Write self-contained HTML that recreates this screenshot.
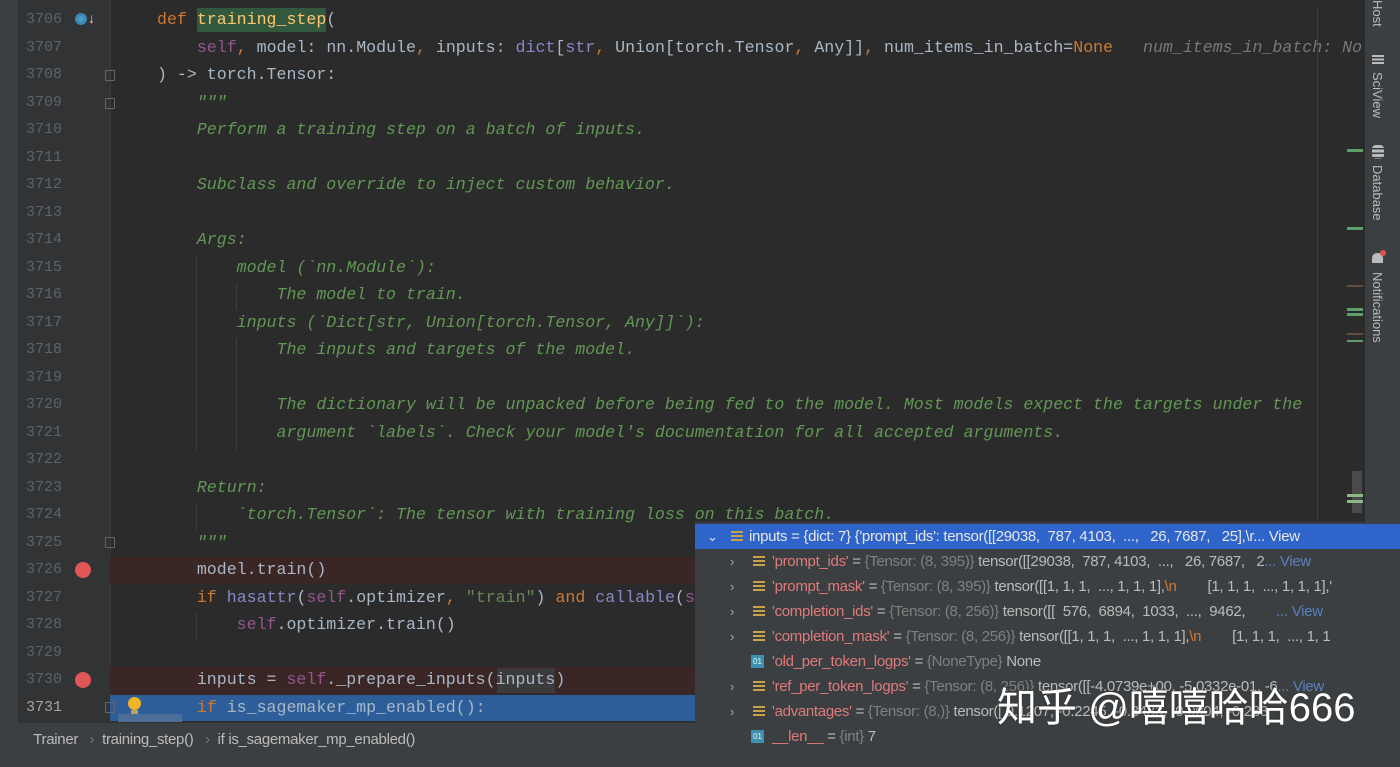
<!DOCTYPE html>
<html><head><meta charset="utf-8"><style>
*{margin:0;padding:0;box-sizing:border-box}
body{width:1400px;height:767px;overflow:hidden;background:#2b2b2b;position:relative;font-family:"Liberation Mono",monospace}
.ln{position:absolute;left:18px;width:44px;text-align:right;color:#5f6366;font-size:15px;height:27px;line-height:27px}
.cl{position:absolute;left:157px;font-size:16.6px;color:#a9b7c6;white-space:pre;height:27px;line-height:27px}
.k{color:#cc7832}.s{color:#94558d}.d{color:#629755;font-style:italic}.st{color:#6a8759}.b{color:#8888c6}
.h{color:#787878;font-style:italic}
.row{position:absolute;left:110px;width:1210px;height:27px}
.bp{position:absolute;left:75px;width:16px;height:16px;border-radius:50%;background:#e05555}
.pop{position:absolute;left:695px;top:522px;width:705px;height:245px;background:#3c3f41;font-family:"Liberation Sans",sans-serif;font-size:15px;color:#bbbbbb;overflow:hidden}
.pr{position:absolute;left:0;height:25px;line-height:25px;white-space:pre;width:705px;letter-spacing:-0.3px}
.pr span{white-space:pre}
.ar{position:absolute;left:35px;color:#aaa;font-size:13px}
.ic{position:absolute;left:58px;top:7px;width:12px;height:11px;background:repeating-linear-gradient(#c9a24a 0 2px,transparent 2px 4px)}
.i01{position:absolute;left:56px;top:6px;width:13px;height:13px;background:#3f8fb0;color:#dfe;font-size:8px;line-height:13px;text-align:center;letter-spacing:0}
.n{color:#e07a7a}.g{color:#808080}.v{color:#5a7fbf}.o{color:#cc7832}
.vt{position:absolute;writing-mode:vertical-rl;color:#bbb;font-family:"Liberation Sans",sans-serif;font-size:13px;left:1370px}
</style></head><body>
<div style="position:absolute;left:0;top:0;width:18px;height:767px;background:#3c3f41"></div>
<div style="position:absolute;left:18px;top:0;width:92px;height:722px;background:#313335"></div>
<div style="position:absolute;left:110px;top:0;width:1px;height:722px;background:#3a3a3a"></div>
<div style="position:absolute;left:1317px;top:8px;width:1px;height:714px;background:#3f3f3f"></div>
<div style="position:absolute;left:1365px;top:0;width:35px;height:522px;background:#3c3f41"></div>
<div class="vt" style="top:0">Host</div>
<div style="position:absolute;left:1372px;top:55px;width:12px;height:9px;background:repeating-linear-gradient(#bbb 0 2px,transparent 2px 3.5px)"></div>
<div class="vt" style="top:72px">SciView</div>
<div style="position:absolute;left:1372px;top:145px;width:12px;height:14px;background:repeating-linear-gradient(#bbb 0 3px,transparent 3px 4.5px);border-radius:4px"></div>
<div class="vt" style="top:165px">Database</div>
<div style="position:absolute;left:1372px;top:253px;width:11px;height:10px;background:#bbb;border-radius:5px 5px 0 0"></div>
<div style="position:absolute;left:1380px;top:250px;width:6px;height:6px;border-radius:50%;background:#e05050"></div>
<div class="vt" style="top:272px">Notifications</div>
<div style="position:absolute;left:1347px;top:149px;width:16px;height:3px;background:#5e9e6a"></div>
<div style="position:absolute;left:1347px;top:227px;width:16px;height:3px;background:#5e9e6a"></div>
<div style="position:absolute;left:1347px;top:285px;width:16px;height:2px;background:#6b4a3e"></div>
<div style="position:absolute;left:1347px;top:308px;width:16px;height:3px;background:#5e9e6a"></div>
<div style="position:absolute;left:1347px;top:313px;width:16px;height:3px;background:#5e9e6a"></div>
<div style="position:absolute;left:1347px;top:333px;width:16px;height:2px;background:#6b4a3e"></div>
<div style="position:absolute;left:1347px;top:340px;width:16px;height:2px;background:#5e9e6a"></div>
<div style="position:absolute;left:1352px;top:471px;width:10px;height:42px;background:#4a4a48"></div>
<div style="position:absolute;left:1347px;top:494px;width:16px;height:3px;background:#8fb88a"></div>
<div style="position:absolute;left:1347px;top:500px;width:16px;height:3px;background:#8fb88a"></div>

<div class="row" style="top:557px;background:#3b2626"></div>
<div class="row" style="top:667px;background:#3b2626"></div>
<div class="row" style="top:695px;left:110px;width:585px;height:26px;background:#2d5e9a"></div>
<div style="position:absolute;left:18px;top:695px;width:92px;height:26px;background:#313335"></div>
<div style="position:absolute;left:118px;top:714px;width:64px;height:8px;background:#4b6e98"></div>
<div style="position:absolute;left:197px;top:8px;width:129px;height:24px;background:#32593d"></div>
<div style="position:absolute;left:497px;top:668px;width:58px;height:25px;background:#3b3b3b"></div>
<div style="position:absolute;left:196px;top:255px;width:1px;height:195px;background:#3d3d3d"></div>
<div style="position:absolute;left:236px;top:283px;width:1px;height:27px;background:#3d3d3d"></div>
<div style="position:absolute;left:236px;top:338px;width:1px;height:112px;background:#3d3d3d"></div>
<div style="position:absolute;left:196px;top:503px;width:1px;height:27px;background:#3d3d3d"></div>
<div style="position:absolute;left:196px;top:613px;width:1px;height:27px;background:#3d3d3d"></div>

<div style="position:absolute;left:75px;top:13px;width:12px;height:12px;border-radius:50%;background:#4a9cc9;border:3px solid #3e87b0"></div>
<div style="position:absolute;left:88px;top:10px;color:#ccc;font-size:14px;font-family:'Liberation Sans'">↓</div>
<div class="bp" style="top:562px"></div>
<div class="bp" style="top:672px"></div>
<div style="position:absolute;left:128px;top:697px;width:13px;height:13px;border-radius:50%;background:#f0b429"></div>
<div style="position:absolute;left:131px;top:710px;width:7px;height:4px;background:#bba060"></div>
<div style="position:absolute;left:105px;top:70px;width:10px;height:11px;border:1px solid #666;border-radius:1px"></div>
<div style="position:absolute;left:105px;top:98px;width:10px;height:11px;border:1px solid #666;border-radius:1px"></div>
<div style="position:absolute;left:105px;top:537px;width:10px;height:11px;border:1px solid #666;border-radius:1px"></div>
<div style="position:absolute;left:105px;top:702px;width:10px;height:11px;border:1px solid #666;border-radius:1px"></div>

<div class="ln" style="top:6px">3706</div>
<div class="ln" style="top:34px">3707</div>
<div class="ln" style="top:61px">3708</div>
<div class="ln" style="top:89px">3709</div>
<div class="ln" style="top:116px">3710</div>
<div class="ln" style="top:144px">3711</div>
<div class="ln" style="top:171px">3712</div>
<div class="ln" style="top:199px">3713</div>
<div class="ln" style="top:226px">3714</div>
<div class="ln" style="top:254px">3715</div>
<div class="ln" style="top:281px">3716</div>
<div class="ln" style="top:309px">3717</div>
<div class="ln" style="top:336px">3718</div>
<div class="ln" style="top:364px">3719</div>
<div class="ln" style="top:391px">3720</div>
<div class="ln" style="top:419px">3721</div>
<div class="ln" style="top:446px">3722</div>
<div class="ln" style="top:474px">3723</div>
<div class="ln" style="top:501px">3724</div>
<div class="ln" style="top:529px">3725</div>
<div class="ln" style="top:556px">3726</div>
<div class="ln" style="top:584px">3727</div>
<div class="ln" style="top:611px">3728</div>
<div class="ln" style="top:639px">3729</div>
<div class="ln" style="top:666px">3730</div>
<div class="ln" style="top:694px;color:#a4a4a4">3731</div>

<div class="cl" style="top:6px"><span class="k">def</span> <span style="color:#ffc66d">training_step</span>(</div>
<div class="cl" style="top:34px">    <span class="s">self</span><span class="k">,</span> model: nn.Module<span class="k">,</span> inputs: <span class="b">dict</span>[<span class="b">str</span><span class="k">,</span> Union[torch.Tensor<span class="k">,</span> Any]]<span class="k">,</span> num_items_in_batch=<span class="k">None</span>   <span class="h">num_items_in_batch: No</span></div>
<div class="cl" style="top:61px">) -> torch.Tensor:</div>
<div class="cl d" style="top:89px">    """</div>
<div class="cl d" style="top:116px">    Perform a training step on a batch of inputs.</div>
<div class="cl d" style="top:171px">    Subclass and override to inject custom behavior.</div>
<div class="cl d" style="top:226px">    Args:</div>
<div class="cl d" style="top:254px">        model (`nn.Module`):</div>
<div class="cl d" style="top:281px">            The model to train.</div>
<div class="cl d" style="top:309px">        inputs (`Dict[str, Union[torch.Tensor, Any]]`):</div>
<div class="cl d" style="top:336px">            The inputs and targets of the model.</div>
<div class="cl d" style="top:391px">            The dictionary will be unpacked before being fed to the model. Most models expect the targets under the</div>
<div class="cl d" style="top:419px">            argument `labels`. Check your model's documentation for all accepted arguments.</div>
<div class="cl d" style="top:474px">    Return:</div>
<div class="cl d" style="top:501px">        `torch.Tensor`: The tensor with training loss on this batch.</div>
<div class="cl d" style="top:529px">    """</div>
<div class="cl" style="top:556px">    model.train()</div>
<div class="cl" style="top:584px">    <span class="k">if</span> <span class="b">hasattr</span>(<span class="s">self</span>.optimizer<span class="k">,</span> <span class="st">"train"</span>) <span class="k">and</span> <span class="b">callable</span>(<span class="s">s</span></div>
<div class="cl" style="top:611px">        <span class="s">self</span>.optimizer.train()</div>
<div class="cl" style="top:666px">    inputs = <span class="s">self</span>._prepare_inputs(inputs)</div>
<div class="cl" style="top:694px">    <span class="k">if</span> is_sagemaker_mp_enabled():</div>

<div style="position:absolute;left:18px;top:722px;width:677px;height:34px;background:#3c3f41;border-top:1px solid #323232;font-family:'Liberation Sans',sans-serif;font-size:15px;color:#bbb;line-height:34px;white-space:pre;letter-spacing:-0.3px">    Trainer   <span style="color:#777">›</span>  training_step()   <span style="color:#777">›</span>  if is_sagemaker_mp_enabled()</div>
<div style="position:absolute;left:0;top:756px;width:695px;height:11px;background:#3c3f41"></div>

<div class="pop">
<div class="pr" style="top:2px;background:#2f65ca;color:#e6e6e6"><span style="position:absolute;left:12px;font-size:13px">⌄</span><div class="ic" style="left:36px"></div><span style="position:absolute;left:54px">inputs = {dict: 7} {'prompt_ids': tensor([[29038,  787, 4103,  ...,   26, 7687,   25],\r... View</span></div>
<div class="pr" style="top:27px"><span class="ar">›</span><div class="ic"></div><span style="position:absolute;left:77px"><span class="n">'prompt_ids'</span> = <span class="g">{Tensor: (8, 395)}</span> tensor([[29038,  787, 4103,  ...,   26, 7687,   2<span class="v">... View</span></span></div>
<div class="pr" style="top:52px"><span class="ar">›</span><div class="ic"></div><span style="position:absolute;left:77px"><span class="n">'prompt_mask'</span> = <span class="g">{Tensor: (8, 395)}</span> tensor([[1, 1, 1,  ..., 1, 1, 1],<span class="o">\n</span>        [1, 1, 1,  ..., 1, 1, 1],'</span></div>
<div class="pr" style="top:77px"><span class="ar">›</span><div class="ic"></div><span style="position:absolute;left:77px"><span class="n">'completion_ids'</span> = <span class="g">{Tensor: (8, 256)}</span> tensor([[  576,  6894,  1033,  ...,  9462,        <span class="v">... View</span></span></div>
<div class="pr" style="top:102px"><span class="ar">›</span><div class="ic"></div><span style="position:absolute;left:77px"><span class="n">'completion_mask'</span> = <span class="g">{Tensor: (8, 256)}</span> tensor([[1, 1, 1,  ..., 1, 1, 1],<span class="o">\n</span>        [1, 1, 1,  ..., 1, 1</span></div>
<div class="pr" style="top:127px"><div class="i01">01</div><span style="position:absolute;left:77px"><span class="n">'old_per_token_logps'</span> = <span class="g">{NoneType}</span> None</span></div>
<div class="pr" style="top:152px"><span class="ar">›</span><div class="ic"></div><span style="position:absolute;left:77px"><span class="n">'ref_per_token_logps'</span> = <span class="g">{Tensor: (8, 256)}</span> tensor([[-4.0739e+00, -5.0332e-01, -6<span class="v">... View</span></span></div>
<div class="pr" style="top:177px"><span class="ar">›</span><div class="ic"></div><span style="position:absolute;left:77px"><span class="n">'advantages'</span> = <span class="g">{Tensor: (8,)}</span> tensor([ 0.1207, -0.2245, -0.3483, -0.0004, -0.283</span></div>
<div class="pr" style="top:202px"><div class="i01">01</div><span style="position:absolute;left:77px"><span class="n">__len__</span> = <span class="g">{int}</span> 7</span></div>
</div>
<div style="position:absolute;left:997px;top:683px;color:#fff;font-family:'Liberation Sans','Noto Sans CJK SC',sans-serif;font-size:40px;line-height:50px;white-space:nowrap;text-shadow:0 0 2px #333">知乎 @嘻嘻哈哈666</div>
</body></html>
